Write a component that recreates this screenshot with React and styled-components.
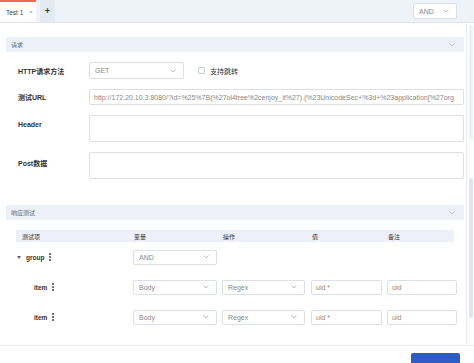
import React from "react";
import styled, { createGlobalStyle } from "styled-components";

const GlobalStyle = createGlobalStyle`
  html, body {
    margin: 0;
    padding: 0;
    background: #ffffff;
  }
  body {
    font-family: "Liberation Sans", "Noto Sans CJK SC", sans-serif;
    color: #333;
  }
`;

const Page = styled.div`
  width: 474px;
  height: 363px;
  overflow: hidden;
  display: flex;
  flex-direction: column;
  background: #fff;
`;

const TabBar = styled.div`
  height: 22px;
  flex: none;
  display: flex;
  align-items: stretch;
  background: #eef2f9;
  border-bottom: 1px solid #dfe4ee;
`;

const Tab = styled.div`
  width: 36px;
  box-sizing: border-box;
  background: #fff;
  border-top: 2px solid #ef6a4a;
  display: flex;
  align-items: center;
  padding-left: 6px;
  gap: 6px;
  font-size: 6.5px;
  color: #444;
`;

const TabClose = styled.span`
  color: #999;
  font-size: 6px;
`;

const AddTab = styled.div`
  width: 15px;
  margin-left: 4px;
  background: #e4e9f2;
  display: flex;
  align-items: center;
  justify-content: center;
  font-size: 9px;
  font-weight: bold;
  color: #333;
`;

const Spacer = styled.div`
  flex: 1;
`;

const TopSelectWrap = styled.div`
  display: flex;
  align-items: center;
  padding-right: 17px;
`;

const Body = styled.div`
  flex: 1;
  display: flex;
  overflow: hidden;
  min-height: 0;
`;

const Content = styled.div`
  flex: 1;
  min-width: 0;
  overflow: hidden;
  padding: 14px 2px 0 6px;
  display: flex;
  flex-direction: column;
`;

const ScrollTrack = styled.div`
  width: 8px;
  flex: none;
  border-left: 1px solid #e8ecf3;
  box-sizing: border-box;
  display: flex;
  flex-direction: column;
  padding: 2px 1px 0 2px;
  gap: 38px;
`;

const ScrollThumb = styled.div`
  height: ${(p) => p.$h}px;
  background: ${(p) => (p.$strong ? "#dfe4ee" : "#eef1f7")};
  border-radius: 2px;
`;

const PanelHeader = styled.div`
  height: 15px;
  flex: none;
  background: #edf0f8;
  display: flex;
  align-items: center;
  justify-content: space-between;
  padding: 0 9px 0 5px;
  font-size: 6px;
  color: #666;
  margin-top: ${(p) => p.$mt || 0}px;
`;

const Form = styled.div`
  display: flex;
  flex-direction: column;
  gap: 10px;
  padding: 10px 0 0 12px;
`;

const FormRow = styled.div`
  display: flex;
  min-width: 0;
  align-items: ${(p) => (p.$top ? "flex-start" : "center")};
`;

const Label = styled.div`
  width: 71px;
  flex: none;
  font-size: 7px;
  font-weight: bold;
  color: #333;
  padding-top: ${(p) => (p.$top ? 6 : 0)}px;
`;

const SelectBox = styled.div`
  width: ${(p) => p.$w}px;
  height: ${(p) => p.$h || 15}px;
  box-sizing: border-box;
  border: 1px solid #dcdfe6;
  border-radius: 2px;
  background: #fff;
  display: flex;
  align-items: center;
  justify-content: space-between;
  padding: 0 7px 0 5px;
  font-size: 7px;
  color: #888;
  flex: none;
`;

const TextInput = styled.div`
  flex: ${(p) => (p.$w ? "none" : 1)};
  width: ${(p) => (p.$w ? `${p.$w}px` : "auto")};
  height: ${(p) => p.$h || 15}px;
  box-sizing: border-box;
  border: 1px solid #dcdfe6;
  border-radius: 2px;
  background: #fff;
  display: flex;
  align-items: center;
  padding: 0 4px;
  font-size: 7px;
  color: #888;
  white-space: nowrap;
  overflow: hidden;
  min-width: 0;
`;

const TextArea = styled.div`
  flex: 1;
  height: 27px;
  box-sizing: border-box;
  border: 1px solid #dcdfe6;
  border-radius: 2px;
  background: #fff;
`;

const CheckLabel = styled.label`
  display: flex;
  align-items: center;
  gap: 5px;
  margin-left: 14px;
  font-size: 7px;
  color: #333;
`;

const CheckBox = styled.span`
  width: 7px;
  height: 7px;
  box-sizing: border-box;
  border: 1px solid #c8ccd4;
  border-radius: 1px;
`;

const Table = styled.div`
  margin: 10px 10px 0 10px;
  display: flex;
  flex-direction: column;
`;

const Grid = styled.div`
  display: grid;
  grid-template-columns: 117px 89px 89px 76px 70px;
  align-items: center;
`;

const HeadRow = styled(Grid)`
  height: 12px;
  background: #edf0f8;
  width: 438px;
  font-size: 6px;
  color: #333;
`;

const HeadCell = styled.div`
  padding-left: ${(p) => p.$pl || 1}px;
`;

const BodyRow = styled(Grid)`
  height: 30px;
`;

const NameCell = styled.div`
  display: flex;
  align-items: center;
  padding-left: ${(p) => p.$indent}px;
  font-size: 6.5px;
  font-weight: bold;
  color: #333;
  gap: 3px;
`;

const Caret = styled.span`
  width: 0;
  height: 0;
  border-left: 2px solid transparent;
  border-right: 2px solid transparent;
  border-top: 3px solid #666;
  margin-right: 2px;
`;

const Kebab = styled.span`
  display: flex;
  flex-direction: column;
  gap: 1.5px;
  margin-left: 2px;
  & > i {
    width: 1.6px;
    height: 1.6px;
    border-radius: 50%;
    background: #555;
  }
`;

const Footer = styled.div`
  height: 10px;
  flex: none;
  border-top: 1px solid #e8ecf3;
  display: flex;
  justify-content: flex-end;
  padding: 7px 14px 0 0;
`;

const PrimaryButton = styled.div`
  width: 49px;
  height: 14px;
  background: #2f5cc2;
  border-radius: 2px;
`;

const Chevron = ({ color = "#aab0bb" }) => (
  <svg width="6" height="4" viewBox="0 0 6 4">
    <polyline points="0.5,0.5 3,3 5.5,0.5" fill="none" stroke={color} strokeWidth="0.8" />
  </svg>
);

const Select = ({ w, h, value }) => (
  <SelectBox $w={w} $h={h}>
    <span>{value}</span>
    <Chevron />
  </SelectBox>
);

const Dots = () => (
  <Kebab>
    <i />
    <i />
    <i />
  </Kebab>
);

const url =
  "http://172.20.10.3:8080/?id=%25%7B(%27ol4tree%2cenjoy_it%27).(%23UnicodeSec+%3d+%23application[%27org";

const items = [1, 2];

export default function App() {
  return (
    <Page>
      <GlobalStyle />
      <TabBar>
        <Tab>
          Test 1 <TabClose>×</TabClose>
        </Tab>
        <AddTab>+</AddTab>
        <Spacer />
        <TopSelectWrap>
          <Select w={44} h={16} value="AND" />
        </TopSelectWrap>
      </TabBar>
      <Body>
        <Content>
          <PanelHeader>
            <span>请求</span>
            <Chevron color="#b5bac4" />
          </PanelHeader>
          <Form>
            <FormRow>
              <Label>HTTP请求方法</Label>
              <Select w={95} h={17} value="GET" />
              <CheckLabel>
                <CheckBox />
                支持跳转
              </CheckLabel>
            </FormRow>
            <FormRow>
              <Label>测试URL</Label>
              <TextInput $h={16}>{url}</TextInput>
            </FormRow>
            <FormRow $top>
              <Label $top>Header</Label>
              <TextArea />
            </FormRow>
            <FormRow $top>
              <Label $top>Post数据</Label>
              <TextArea />
            </FormRow>
          </Form>
          <PanelHeader $mt={26}>
            <span>响应测试</span>
            <Chevron color="#b5bac4" />
          </PanelHeader>
          <Table>
            <HeadRow>
              <HeadCell $pl={6}>测试项</HeadCell>
              <HeadCell>变量</HeadCell>
              <HeadCell>操作</HeadCell>
              <HeadCell>值</HeadCell>
              <HeadCell>备注</HeadCell>
            </HeadRow>
            <BodyRow>
              <NameCell $indent={1}>
                <Caret />
                group
                <Dots />
              </NameCell>
              <Select w={84} value="AND" />
            </BodyRow>
            {items.map((n) => (
              <BodyRow key={n}>
                <NameCell $indent={18}>
                  item
                  <Dots />
                </NameCell>
                <Select w={84} value="Body" />
                <Select w={83} value="Regex" />
                <TextInput $w={71}>uid *</TextInput>
                <TextInput $w={70}>uid</TextInput>
              </BodyRow>
            ))}
          </Table>
          <PanelHeader $mt={16}>
            <span>断言结果</span>
          </PanelHeader>
        </Content>
        <ScrollTrack>
          <ScrollThumb $h={115} />
          <ScrollThumb $h={140} $strong />
        </ScrollTrack>
      </Body>
      <Footer>
        <PrimaryButton />
      </Footer>
    </Page>
  );
}
